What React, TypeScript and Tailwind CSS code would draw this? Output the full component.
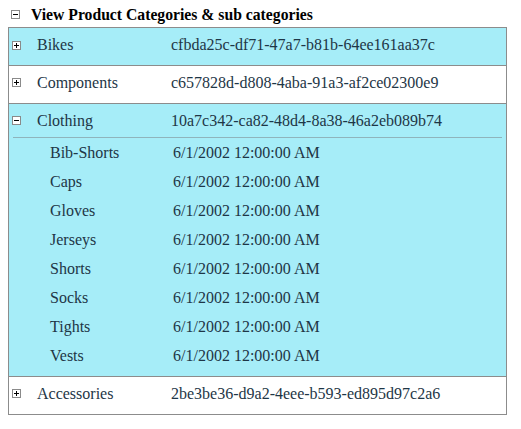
import React from "react";

function Box({ open }: { open: boolean }) {
  return (
    <svg width="9" height="9" viewBox="0 0 9 9" className="shrink-0">
      <rect x="0.5" y="0.5" width="8" height="8" fill="#ffffff" stroke="#8a8a8a" />
      <line x1="2" y1="4.5" x2="7" y2="4.5" stroke="#000" />
      {!open && <line x1="4.5" y1="2" x2="4.5" y2="7" stroke="#000" />}
    </svg>
  );
}

const children = ["Bib-Shorts", "Caps", "Gloves", "Jerseys", "Shorts", "Socks", "Tights", "Vests"];

export default function App() {
  return (
    <div
      className="w-[521px] h-[429px] bg-white text-[#1e3646]"
      style={{ fontFamily: '"Liberation Serif", "Times New Roman", serif' }}
    >
      <div className="flex items-center h-[27px] pl-[11px] pt-[2px]">
        <Box open />
        <span className="ml-[11px] text-[15.7px] font-bold text-black">View Product Categories &amp; sub categories</span>
      </div>
      <div className="ml-[8px] w-[499px] border border-[#8c8c8c] text-[16px]">
        <div className="flex items-center h-[38px] bg-[#a6edf8] border-b border-[#8c8c8c] pl-[3px] pb-[3px]">
          <Box open={false} />
          <span className="ml-[16px] w-[134px]">Bikes</span>
          <span>cfbda25c-df71-47a7-b81b-64ee161aa37c</span>
        </div>
        <div className="flex items-center h-[38px] bg-white border-b border-[#8c8c8c] pl-[3px] pb-[4px]">
          <Box open={false} />
          <span className="ml-[16px] w-[134px]">Components</span>
          <span>c657828d-d808-4aba-91a3-af2ce02300e9</span>
        </div>
        <div className="bg-[#a6edf8] border-b border-[#8c8c8c] pb-[6px]">
          <div className="flex items-center h-[33px] pl-[3px]">
            <Box open />
            <span className="ml-[16px] w-[134px]">Clothing</span>
            <span>10a7c342-ca82-48d4-8a38-46a2eb089b74</span>
          </div>
          <div className="mx-[4px] h-px bg-[#8fb4bc]" />
          {children.map((c) => (
            <div key={c} className="flex items-center h-[29px] pl-[41px]">
              <span className="w-[123px]">{c}</span>
              <span>6/1/2002 12:00:00 AM</span>
            </div>
          ))}
        </div>
        <div className="flex items-center h-[37px] bg-white pl-[3px] pb-[4px]">
          <Box open={false} />
          <span className="ml-[16px] w-[134px]">Accessories</span>
          <span>2be3be36-d9a2-4eee-b593-ed895d97c2a6</span>
        </div>
      </div>
    </div>
  );
}
